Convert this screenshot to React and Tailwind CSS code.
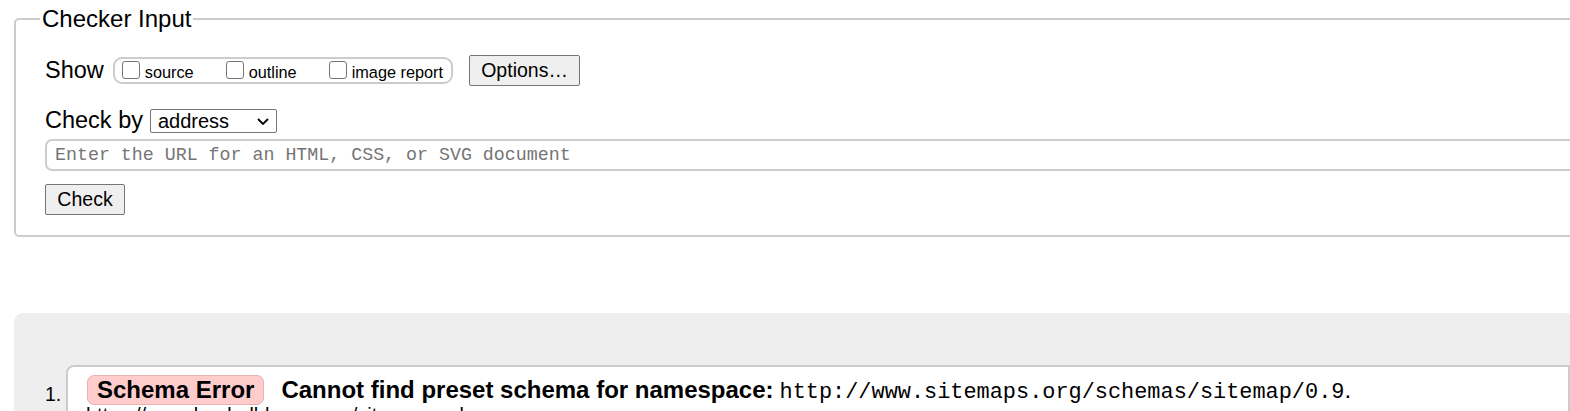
function Box({ label, first }) {
  return (
    <label className={`flex items-center shrink-0 ${first ? '' : 'ml-[32px]'}`}>
      <span className="shrink-0 w-[18px] h-[18px] mb-[2px] border border-[#767676] rounded-[3px] bg-white" />
      <span className="ml-[5px] text-[16.3px] leading-none pt-[3px] whitespace-nowrap">{label}</span>
    </label>
  );
}

export default function App() {
  return (
    <div className="w-[1570px] h-[411px] overflow-hidden bg-white text-black font-['Liberation_Sans',Arial,sans-serif]">
      {/* Checker input form */}
      <fieldset className="mt-[6px] ml-[14px] mr-[-60px] border-2 border-[#cccccc] rounded-[5px] pl-[29px] pr-0 pt-[23px] pb-[20px]">
        <legend className="ml-[-5px] px-[2px] text-[24px] leading-[26px]">Checker Input</legend>

        <div className="flex items-center h-[31px]">
          <span className="text-[23.5px] leading-none">Show</span>
          <div className="ml-[9px] flex items-center h-[27px] border-2 border-[#cccccc] rounded-[9px] pl-[7px] pr-[8px]">
            <Box label="source" first />
            <Box label="outline" />
            <Box label="image report" />
          </div>
          <button className="ml-[16px] w-[111px] h-[31px] border border-[#767676] rounded-[2px] bg-[#efefef] text-[19.5px] leading-none">
            Options…
          </button>
        </div>

        <div className="mt-[23px] flex items-center h-[24px]">
          <span className="text-[23.5px] leading-none">Check by</span>
          <div className="ml-[7px] w-[127px] h-[24px] border border-[#767676] rounded-[2px] bg-white flex items-center justify-between pl-[7px] pr-[7px]">
            <span className="text-[20px] leading-none">address</span>
            <svg width="12" height="7" viewBox="0 0 12 7" className="mt-[1px]">
              <polyline points="1,1 6,6 11,1" fill="none" stroke="#000" strokeWidth="1.8" />
            </svg>
          </div>
        </div>

        <div className="mt-[6px] h-[32px] border-2 border-[#cccccc] rounded-[7px] flex items-center pl-[8px]">
          <span className="font-['Liberation_Mono','DejaVu_Sans_Mono',monospace] text-[18.3px] leading-none text-[#757575]">
            Enter the URL for an HTML, CSS, or SVG document
          </span>
        </div>

        <button className="mt-[13px] w-[80px] h-[31px] border border-[#767676] rounded-[2px] bg-[#efefef] text-[19.5px] leading-none">
          Check
        </button>
      </fieldset>

      {/* Results */}
      <div className="mt-[76px] ml-[14px] h-[200px] bg-[#eeeeee] rounded-tl-[9px] pt-[52px] pl-[31px] flex">
        <span className="w-[21px] pt-[20px] text-[19.5px] leading-none">1.</span>
        <div className="flex-1 bg-white border-2 border-[#cccccc] rounded-tl-[8px] pl-[19px] pt-[8px]">
          <div className="flex items-baseline">
            <span className="h-[30px] px-[9px] flex items-center bg-[#ffcccc] border border-[#e6b3b3] rounded-[7px] text-[24px] font-bold leading-none">
              Schema Error
            </span>
            <span className="ml-[17px] text-[24px] font-bold leading-none">Cannot find preset schema for namespace:</span>
            <span className="ml-[6px] font-['Liberation_Mono','DejaVu_Sans_Mono',monospace] text-[21.9px] leading-none">
              http://www.sitemaps.org/schemas/sitemap/0.9
            </span>
            <span className="text-[24px] leading-none">.</span>
          </div>
          <div className="ml-[-1px] mt-[-1px] text-[20px] leading-[22px]">https://www.loadedbloom.com/sitemap.xml</div>
        </div>
      </div>
    </div>
  );
}
